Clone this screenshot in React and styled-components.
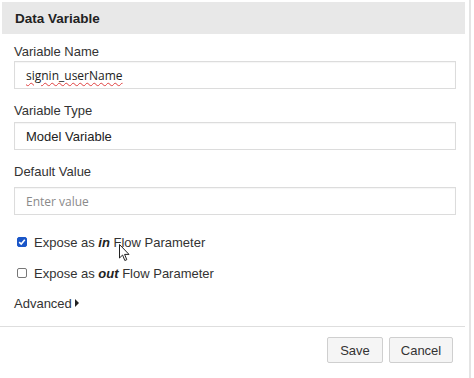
import React from "react";
import styled, { createGlobalStyle } from "styled-components";

const Global = createGlobalStyle`
  html, body { margin: 0; padding: 0; background: #fff; }
  body { font-family: "Liberation Sans", Arial, sans-serif; color: #333; }
`;

const Panel = styled.div`
  position: relative;
  width: 471px;
  height: 378px;
  border-right: 2px solid #e4e4e4;
  display: flex;
  flex-direction: column;
  box-sizing: border-box;
`;

const Header = styled.div`
  margin: 2px 4px 0 2px;
  height: 32px;
  background: #e8e8e8;
  display: flex;
  align-items: center;
  padding-left: 13px;
  font-weight: bold;
  font-size: 13.5px;
  color: #222;
`;

const Body = styled.div`
  padding: 10px 13px 0 14px;
  display: flex;
  flex-direction: column;
`;

const Field = styled.div`
  display: flex;
  flex-direction: column;
  margin-bottom: ${(p) => p.$mb || 14}px;
`;

const Label = styled.label`
  font-size: 13px;
  line-height: 16px;
  color: #333;
  margin-bottom: ${(p) => p.$gap ?? 3}px;
`;

const Input = styled.div`
  height: 28px;
  box-sizing: border-box;
  border: 1px solid #dcdcdc;
  box-shadow: inset 0 1px 1px rgba(0, 0, 0, 0.04);
  display: flex;
  align-items: center;
  padding-left: 11px;
  font-family: ${(p) => (p.$segoe ? '"Open Sans", "Noto Sans", sans-serif' : '"Liberation Sans", Arial, sans-serif')};
  font-size: ${(p) => (p.$segoe ? 12 : 13)}px;
  color: ${(p) => (p.$placeholder ? "#8a8a8a" : "#222")};
`;

const Squiggle = styled.span`
  text-decoration: underline wavy #e04040;
  text-decoration-thickness: 1px;
  text-underline-offset: 2px;
`;

const CheckRow = styled.div`
  display: flex;
  align-items: center;
  height: 18px;
  margin: ${(p) => p.$m || "0"};
  padding-left: 3px;
  font-size: 13px;
  color: #333;
`;

const Box = styled.span`
  width: 10px;
  height: 10px;
  box-sizing: border-box;
  border-radius: 2px;
  border: 1px solid ${(p) => (p.$checked ? "#1a56c8" : "#777")};
  background: ${(p) => (p.$checked ? "#1a56c8" : "#fff")};
  margin-right: 7px;
  display: flex;
  align-items: center;
  justify-content: center;
`;

const Em = styled.b`
  font-style: italic;
  font-weight: bold;
  color: #222;
`;

const Advanced = styled.div`
  display: flex;
  align-items: center;
  font-size: 13px;
  color: #333;
  margin-top: 12px;
  height: 18px;
`;

const Caret = styled.span`
  width: 0;
  height: 0;
  border-top: 4px solid transparent;
  border-bottom: 4px solid transparent;
  border-left: 4px solid #222;
  margin-left: 3px;
`;

const Divider = styled.div`
  margin-top: 14px;
  margin-right: 4px;
  height: 1px;
  background: #dedede;
`;

const Footer = styled.div`
  display: flex;
  justify-content: flex-end;
  gap: 6px;
  padding: 10px 16px 0 0;
`;

const Button = styled.button`
  height: 26px;
  width: ${(p) => p.$w}px;
  padding: 0;
  background: #f5f5f5;
  border: 1px solid #cfcfcf;
  border-radius: 2px;
  font-family: "Liberation Sans", Arial, sans-serif;
  font-size: 13px;
  color: #333;
`;

const Cursor = styled.svg`
  position: absolute;
  left: 119px;
  top: 244px;
`;

export default function App() {
  return (
    <>
      <Global />
      <Panel>
        <Header>Data Variable</Header>
        <Body>
          <Field>
            <Label $gap={1}>Variable Name</Label>
            <Input $segoe>
              <Squiggle>signin_userName</Squiggle>
            </Input>
          </Field>
          <Field>
            <Label>Variable Type</Label>
            <Input>Model Variable</Input>
          </Field>
          <Field $mb={18}>
            <Label $gap={7}>Default Value</Label>
            <Input $segoe $placeholder>Enter value</Input>
          </Field>
          <CheckRow>
            <Box $checked>
              <svg width="8" height="8" viewBox="0 0 8 8">
                <path d="M1.2 4.2 L3.2 6 L6.8 1.8" stroke="#fff" strokeWidth="1.6" fill="none" />
              </svg>
            </Box>
            Expose as&nbsp;<Em>in</Em>&nbsp;Flow Parameter
          </CheckRow>
          <CheckRow $m="13px 0 0 0">
            <Box />
            Expose as&nbsp;<Em>out</Em>&nbsp;Flow Parameter
          </CheckRow>
          <Advanced>
            Advanced
            <Caret />
          </Advanced>
        </Body>
        <Divider />
        <Footer>
          <Button $w={56}>Save</Button>
          <Button $w={64}>Cancel</Button>
        </Footer>
        <Cursor width="12" height="18" viewBox="0 0 12 18">
          <path d="M0.5 0.5 L0.5 14 L3.6 11 L5.8 16.5 L7.8 15.7 L5.6 10.4 L10 10.4 Z" fill="#fff" stroke="#222" strokeWidth="1" strokeLinejoin="round" />
        </Cursor>
      </Panel>
    </>
  );
}
